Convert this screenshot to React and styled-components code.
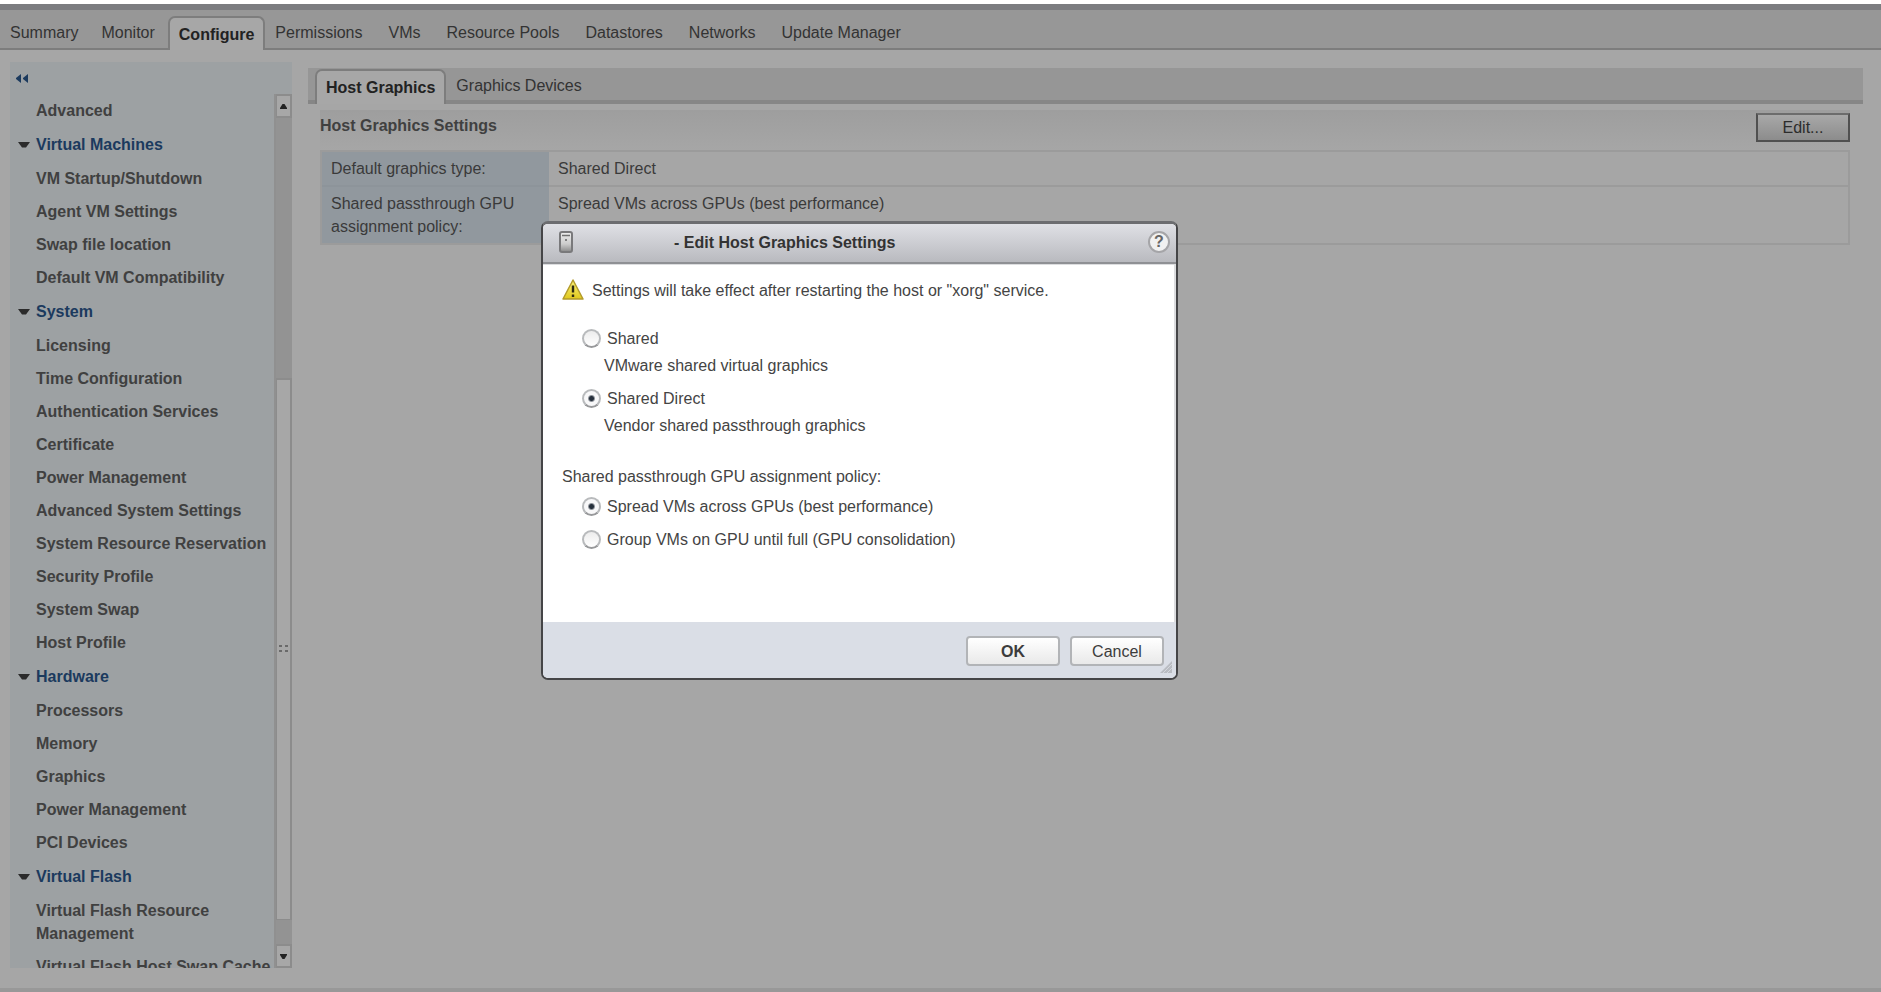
import React, { useState } from "react";
import styled, { createGlobalStyle, css } from "styled-components";

const GlobalStyle = createGlobalStyle`
  *, *::before, *::after { box-sizing: border-box; }
  html, body { margin: 0; height: 100%; }
  #root { height: 100%; }
  body, button, input {
    font-family: "Liberation Sans", Arial, sans-serif;
    font-size: 16px;
    line-height: 23px;
  }
`;

const Page = styled.div`
  position: relative;
  display: flex;
  flex-direction: column;
  min-height: 100vh;
  height: 100vh;
  overflow: hidden;
  background: #a6a6a6;
  color: #3a3a3a;
  border-top: 4px solid #fff;
  border-bottom: 4px solid #989898;
`;

const TopBand = styled.div`
  flex: none;
  height: 6px;
  background: #7c7d80;
`;

const PrimaryTabs = styled.nav`
  flex: none;
  display: flex;
  align-items: flex-end;
  height: 40px;
  background: linear-gradient(#7d7d7d, #7d7d7d) bottom / 100% 2px no-repeat #979797;
`;

const tabBase = css`
  margin: 0;
  border: 0;
  background: none;
  color: #333;
  white-space: nowrap;
`;

const activeTab = css`
  border: 2px solid #7d7d7d;
  border-bottom: 0;
  border-radius: 7px 7px 0 0;
  background: #a7a7a7;
  color: #222;
  font-weight: bold;
`;

const PrimaryTab = styled.button`
  ${tabBase}
  height: 34px;
  padding: 0 13px 2px 10px;

  &[aria-current] {
    ${activeTab}
    padding: 0 9px;
  }
  &[aria-current] ~ & {
    padding: 0 16px 2px 10px;
  }
`;

const Content = styled.div`
  flex: 1;
  min-height: 0;
  display: flex;
  gap: 16px;
  padding: 12px 18px 20px 10px;
`;

const Sidebar = styled.aside`
  flex: none;
  display: flex;
  flex-direction: column;
  width: 282px;
  background: #9da1a3;
`;

const CollapseButton = styled.button`
  flex: none;
  display: flex;
  align-items: center;
  height: 32px;
  padding: 0 6px;
  border: 0;
  background: none;
`;

const SidebarBody = styled.div`
  flex: 1;
  min-height: 0;
  display: flex;
`;

const NavList = styled.nav`
  flex: 1;
  min-width: 0;
  overflow: hidden;
`;

const NavLink = styled.a`
  display: block;
  padding: 5px 0 5px 26px;
  color: #404040;
  font-weight: bold;
  text-decoration: none;
`;

const NavHeading = styled.button`
  display: flex;
  align-items: center;
  gap: 6px;
  width: 100%;
  height: 35px;
  padding: 0 8px;
  border: 0;
  background: none;
  color: #1b3a5e;
  font-weight: bold;
  text-align: left;
`;

const Scrollbar = styled.div`
  flex: none;
  display: flex;
  flex-direction: column;
  width: 18px;
  border-left: 2px solid #909090;
  background: #939393;
`;

const ScrollArrow = styled.button`
  flex: none;
  display: flex;
  align-items: center;
  justify-content: center;
  height: 24px;
  padding: 0;
  border: 2px solid #8c8c8c;
  border-left-width: 1px;
  background: #a7a7a7;
`;

const ScrollSpace = styled.div`
  flex: ${(p) => p.$grow};
`;

const ScrollThumb = styled.div`
  flex: 542;
  display: flex;
  align-items: center;
  justify-content: center;
  border: 2px solid #8c8c8c;
  border-width: 2px 2px 1px 1px;
  background: #a7a7a7;
`;

const Main = styled.main`
  flex: 1;
  min-width: 0;
  padding-top: 6px;
`;

const SecondaryTabs = styled.div`
  display: flex;
  align-items: flex-end;
  height: 36px;
  padding-left: 7px;
  background: linear-gradient(#868686, #868686) bottom / 100% 4px no-repeat #969696;
`;

const SecondaryTab = styled.button`
  ${tabBase}
  height: 35px;
  padding: 0 10px 2px;

  &[aria-current] {
    ${activeTab}
    padding: 0 9px;
  }
`;

const Panel = styled.section`
  padding: 6px 13px 0 12px;
`;

const PanelHeader = styled.header`
  display: flex;
  align-items: center;
  justify-content: space-between;
  height: 40px;
  padding-bottom: 5px;
  background: linear-gradient(#9e9e9e, #a6a6a6);
`;

const PanelTitle = styled.h2`
  margin: 0;
  padding-bottom: 4px;
  font-size: 16px;
  color: #404040;
`;

const EditButton = styled.button`
  width: 94px;
  height: 29px;
  padding: 0;
  border: 2px solid #505050;
  border-top-color: #6c6c6c;
  background: linear-gradient(#a8a8a8, #8c8c8c);
  color: #2c2c2c;
`;

const SettingsTable = styled.table`
  width: 100%;
  border: 2px solid #9b9b9b;
  border-spacing: 0;
  table-layout: fixed;

  th, td {
    padding: 5px 9px;
    vertical-align: top;
    text-align: left;
    font-weight: normal;
  }
  th {
    width: 227px;
    background: #91989e;
  }
  tr + tr td { border-top: 2px solid #9b9b9b; }
  tr + tr th { border-top: 2px solid #8d949a; }
`;

const Dialog = styled.section`
  position: absolute;
  top: 217px;
  left: 541px;
  display: flex;
  flex-direction: column;
  width: 637px;
  border: 2px solid #454547;
  border-top: 3px solid #6c6d70;
  border-radius: 7px;
  background: #fff;
  color: #444;
  overflow: hidden;
`;

const DialogHeader = styled.header`
  display: flex;
  align-items: center;
  height: 40px;
  padding: 0 6px 2px 16px;
  border-bottom: 2px solid #8f9094;
  background: linear-gradient(#dfe0e5, #b9babf);
`;

const DialogTitle = styled.h1`
  flex: 1;
  margin: 0;
  padding-left: 101px;
  font-size: 16px;
  color: #333;
`;

const HelpButton = styled.button`
  width: 22px;
  height: 22px;
  padding: 0;
  border: 2px solid #a5a5a8;
  border-radius: 50%;
  background: #f1f1f1;
  color: #666;
  font-weight: bold;
  line-height: 18px;
`;

const DialogBody = styled.div`
  height: 358px;
  padding: 14px 19px 0;
  border: 2px solid #dcdddf;
  border-width: 1px 2px 0 0;
`;

const Notice = styled.p`
  display: flex;
  align-items: flex-start;
  gap: 8px;
  margin: 0 0 25px;
`;

const Options = styled.div`
  display: flex;
  flex-direction: column;
  gap: 10px;
  padding-left: 20px;
`;

const Option = styled.label`
  display: flex;
  align-items: center;
  gap: 6px;
`;

const Radio = styled.input`
  appearance: none;
  width: 19px;
  height: 19px;
  margin: 0;
  border: 2px solid #b8babc;
  border-bottom-color: #98999b;
  border-radius: 50%;
  background: linear-gradient(#ececec, #fff);

  &:checked {
    background: radial-gradient(circle, #26303c 0 2px, #f8f8f9 4px);
  }
`;

const Hint = styled.p`
  margin: 4px 0 0 22px;
`;

const PolicyLabel = styled.p`
  margin: 28px 0 7px;
`;

const DialogFooter = styled.footer`
  position: relative;
  display: flex;
  justify-content: flex-end;
  gap: 10px;
  padding: 14px 12px 12px;
  background: #dadee6;
`;

const DialogButton = styled.button`
  width: 94px;
  height: 30px;
  padding: 0;
  border: 2px solid #b2b4b7;
  border-radius: 4px;
  background: linear-gradient(#fff, #e9e9e9);
  color: #3c3c3c;
  font-weight: ${(p) => (p.$primary ? "bold" : "normal")};
`;

const ResizeGrip = styled.svg`
  position: absolute;
  right: 4px;
  bottom: 5px;
`;

const DownArrow = () => (
  <svg width="12" height="7" viewBox="0 0 12 7" aria-hidden="true">
    <path d="M0 1h12L8 6.5H4z" fill="#2b2b2b" />
  </svg>
);

const ScrollGlyph = ({ down }) => (
  <svg width="7" height="5" viewBox="0 0 7 5" aria-hidden="true">
    <path d={down ? "M0 0h7v1L4.5 5h-2L0 1z" : "M0 5h7V4L4.5 0h-2L0 4z"} fill="#222" />
  </svg>
);

const ServerIcon = () => (
  <svg width="14" height="22" viewBox="0 0 14 22" aria-hidden="true">
    <defs>
      <linearGradient id="server" x1="0" y1="0" x2="0" y2="1">
        <stop offset="0" stopColor="#eee" />
        <stop offset="0.6" stopColor="#ccc" />
        <stop offset="1" stopColor="#888" />
      </linearGradient>
    </defs>
    <rect x="1" y="1" width="12" height="20" rx="2" fill="url(#server)" stroke="#79797b" strokeWidth="2" />
    <path d="M3 4.5h8" stroke="#707070" strokeWidth="1.5" />
    <rect x="6" y="8" width="2" height="2" fill="#808080" />
  </svg>
);

const WarningIcon = () => (
  <svg width="22" height="21" viewBox="0 0 22 21" aria-hidden="true">
    <defs>
      <linearGradient id="warning" x1="0" y1="0" x2="0" y2="1">
        <stop offset="0" stopColor="#fbf27a" />
        <stop offset="1" stopColor="#e0c81c" />
      </linearGradient>
    </defs>
    <path d="M11 1 21 20H1z" fill="url(#warning)" stroke="#b39b2c" strokeWidth="1.5" strokeLinejoin="round" />
    <path d="M11 6.5v7M11 15.5v2.5" stroke="#2e2a12" strokeWidth="2.4" />
  </svg>
);

const PRIMARY = ["Summary", "Monitor", "Configure", "Permissions", "VMs", "Resource Pools", "Datastores", "Networks", "Update Manager"];

const SECTIONS = [
  { items: ["Advanced"] },
  {
    title: "Virtual Machines",
    items: ["VM Startup/Shutdown", "Agent VM Settings", "Swap file location", "Default VM Compatibility"],
  },
  {
    title: "System",
    items: [
      "Licensing", "Time Configuration", "Authentication Services", "Certificate", "Power Management",
      "Advanced System Settings", "System Resource Reservation", "Security Profile", "System Swap", "Host Profile",
    ],
  },
  { title: "Hardware", items: ["Processors", "Memory", "Graphics", "Power Management", "PCI Devices"] },
  { title: "Virtual Flash", items: ["Virtual Flash Resource Management", "Virtual Flash Host Swap Cache"] },
];

export default function App() {
  const [type, setType] = useState("direct");
  const [policy, setPolicy] = useState("spread");

  return (
    <Page>
      <GlobalStyle />
      <TopBand />
      <PrimaryTabs>
        {PRIMARY.map((name) => (
          <PrimaryTab key={name} aria-current={name === "Configure" ? "page" : undefined}>{name}</PrimaryTab>
        ))}
      </PrimaryTabs>

      <Content>
        <Sidebar>
          <CollapseButton aria-label="Collapse">
            <svg width="12" height="9" viewBox="0 0 12 9" aria-hidden="true">
              <path d="M5 0v9L0 5V4zM12 0v9L7 5V4z" fill="#1b3a5e" />
            </svg>
          </CollapseButton>
          <SidebarBody>
            <NavList>
              {SECTIONS.map(({ title, items }) => (
                <React.Fragment key={items[0]}>
                  {title && <NavHeading><DownArrow />{title}</NavHeading>}
                  {items.map((item) => <NavLink href="#" key={item}>{item}</NavLink>)}
                </React.Fragment>
              ))}
            </NavList>
            <Scrollbar>
              <ScrollArrow aria-label="Scroll up"><ScrollGlyph /></ScrollArrow>
              <ScrollSpace $grow={261} />
              <ScrollThumb>
                <svg width="9" height="8" viewBox="0 0 9 8" aria-hidden="true">
                  <path d="M0 0h3v2H0zM6 0h3v2H6zM0 5h3v2H0zM6 5h3v2H6z" fill="#6a6a6a" />
                </svg>
              </ScrollThumb>
              <ScrollSpace $grow={24} />
              <ScrollArrow aria-label="Scroll down"><ScrollGlyph down /></ScrollArrow>
            </Scrollbar>
          </SidebarBody>
        </Sidebar>

        <Main>
          <SecondaryTabs>
            <SecondaryTab aria-current="page">Host Graphics</SecondaryTab>
            <SecondaryTab>Graphics Devices</SecondaryTab>
          </SecondaryTabs>
          <Panel>
            <PanelHeader>
              <PanelTitle>Host Graphics Settings</PanelTitle>
              <EditButton>Edit...</EditButton>
            </PanelHeader>
            <SettingsTable>
              <tbody>
                <tr>
                  <th scope="row">Default graphics type:</th>
                  <td>Shared Direct</td>
                </tr>
                <tr>
                  <th scope="row">Shared passthrough GPU assignment policy:</th>
                  <td>Spread VMs across GPUs (best performance)</td>
                </tr>
              </tbody>
            </SettingsTable>
          </Panel>
        </Main>
      </Content>

      <Dialog role="dialog" aria-labelledby="dialog-title">
        <DialogHeader>
          <ServerIcon />
          <DialogTitle id="dialog-title">- Edit Host Graphics Settings</DialogTitle>
          <HelpButton aria-label="Help">?</HelpButton>
        </DialogHeader>
        <DialogBody>
          <Notice>
            <WarningIcon />
            Settings will take effect after restarting the host or "xorg" service.
          </Notice>
          <Options>
            <div>
              <Option>
                <Radio type="radio" name="type" checked={type === "shared"} onChange={() => setType("shared")} />
                Shared
              </Option>
              <Hint>VMware shared virtual graphics</Hint>
            </div>
            <div>
              <Option>
                <Radio type="radio" name="type" checked={type === "direct"} onChange={() => setType("direct")} />
                Shared Direct
              </Option>
              <Hint>Vendor shared passthrough graphics</Hint>
            </div>
          </Options>
          <PolicyLabel id="policy-label">Shared passthrough GPU assignment policy:</PolicyLabel>
          <Options role="radiogroup" aria-labelledby="policy-label">
            <Option>
              <Radio type="radio" name="policy" checked={policy === "spread"} onChange={() => setPolicy("spread")} />
              Spread VMs across GPUs (best performance)
            </Option>
            <Option>
              <Radio type="radio" name="policy" checked={policy === "group"} onChange={() => setPolicy("group")} />
              Group VMs on GPU until full (GPU consolidation)
            </Option>
          </Options>
        </DialogBody>
        <DialogFooter>
          <DialogButton $primary>OK</DialogButton>
          <DialogButton>Cancel</DialogButton>
          <ResizeGrip width="12" height="12" viewBox="0 0 12 12" aria-hidden="true">
            <path d="M12 0v12H0z" fill="#b9bcc2" />
            <path d="M3 12 12 3M7 12l5-5" stroke="#d4d7dd" />
          </ResizeGrip>
        </DialogFooter>
      </Dialog>
    </Page>
  );
}
